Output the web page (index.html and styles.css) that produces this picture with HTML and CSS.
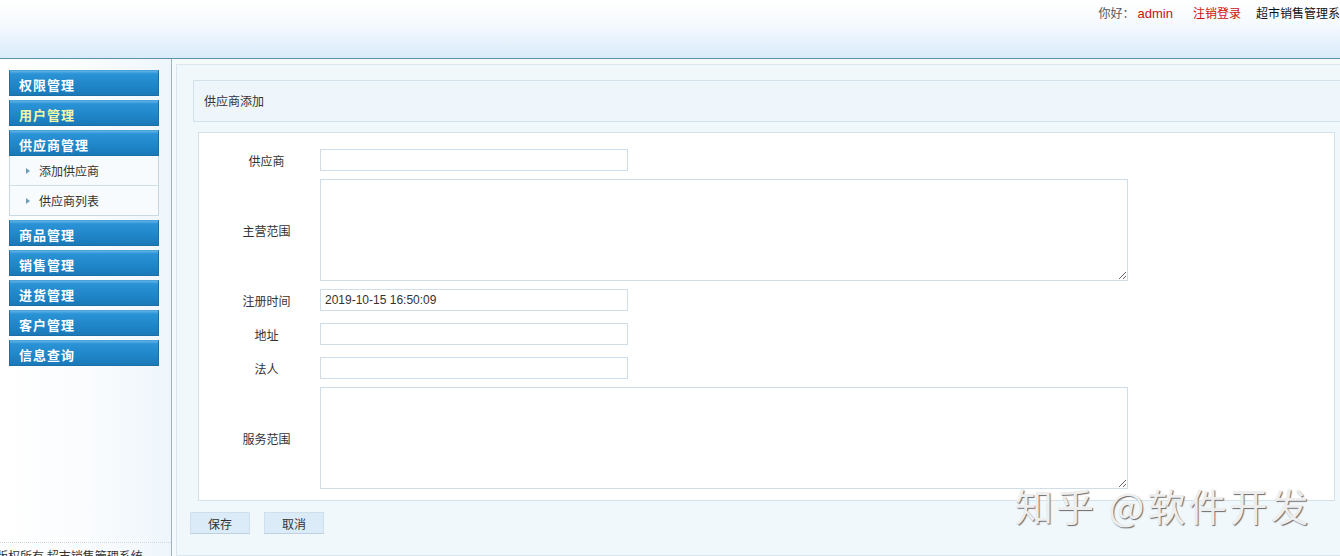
FILE: index.html
```html
<!DOCTYPE html>
<html lang="zh-CN">

<head>
  <meta charset="UTF-8">
  <meta name="viewport" content="width=device-width, initial-scale=1.0">
  <title>超市销售管理系统</title>
  <link rel="stylesheet" href="styles.css">
</head>

<body>
  <!-- Header -->
  <div class="header">
    <div class="user-info">
      <span class="hello">你好：</span>
      <span class="user-name">admin</span>
      <a class="logout" href="#">注销登录</a>
      <span class="sys-name">超市销售管理系统</span>
    </div>
  </div>

  <div class="main">
    <!-- Sidebar -->
    <div class="sidebar">
      <ul class="menu">
        <li class="menu-title">权限管理</li>
        <li class="menu-title active">用户管理</li>
        <li class="menu-title">供应商管理</li>
        <li class="menu-sub">
          <a href="#"><span class="arrow"></span>添加供应商</a>
          <a href="#"><span class="arrow"></span>供应商列表</a>
        </li>
        <li class="menu-title">商品管理</li>
        <li class="menu-title">销售管理</li>
        <li class="menu-title">进货管理</li>
        <li class="menu-title">客户管理</li>
        <li class="menu-title">信息查询</li>
      </ul>
      <div class="side-footer">版权所有 超市销售管理系统</div>
    </div>

    <!-- Content -->
    <div class="content">
      <div class="panel">
        <div class="panel-title">供应商添加</div>

        <form class="form-box" onsubmit="return false;">
          <div class="form-row">
            <label for="gys">供应商</label>
            <input type="text" id="gys">
          </div>
          <div class="form-row">
            <label for="zyfw">主营范围</label>
            <textarea id="zyfw"></textarea>
          </div>
          <div class="form-row">
            <label for="zcsj">注册时间</label>
            <input type="text" id="zcsj" value="2019-10-15 16:50:09">
          </div>
          <div class="form-row spaced">
            <label for="dz">地址</label>
            <input type="text" id="dz">
          </div>
          <div class="form-row spaced">
            <label for="fr">法人</label>
            <input type="text" id="fr">
          </div>
          <div class="form-row">
            <label for="fwfw">服务范围</label>
            <textarea id="fwfw"></textarea>
          </div>
        </form>

        <div class="btn-row">
          <button class="btn">保存</button>
          <button class="btn">取消</button>
        </div>
      </div>
    </div>
  </div>

  <div class="watermark">知乎 @软件开发</div>
</body>

</html>
```

FILE: styles.css
```css
body {
  font-family: "Noto Sans CJK SC", "Liberation Sans", sans-serif;
  font-size: 12px;
  color: #333333;
  margin: 0;
  padding: 0;
  width: 1340px;
  height: 556px;
  overflow: hidden;
  position: relative;
}

/* Header */
.header {
  height: 58px;
  background: linear-gradient(to bottom, #ffffff 0%, #f6fafe 40%, #d9ebfa 100%);
  border-bottom: 1px solid #5f93ab;
  display: flex;
  justify-content: flex-end;
  overflow: hidden;
}

.user-info {
  display: flex;
  align-items: baseline;
  height: 26px;
  line-height: 26px;
  margin-right: -12px;
  white-space: nowrap;
}

.hello {
  color: #555555;
  font-size: 12px;
}

.user-name {
  color: #cc1111;
  font-family: "Liberation Sans", sans-serif;
  font-size: 13px;
  margin-left: 3px;
}

.logout {
  color: #cc1111;
  text-decoration: none;
  margin-left: 20px;
}

.sys-name {
  color: #111111;
  margin-left: 15px;
}

/* Layout */
.main {
  display: flex;
  height: 497px;
}

/* Sidebar */
.sidebar {
  width: 171px;
  border-right: 1px solid #9fb3bf;
  background: linear-gradient(to right, #ffffff 0%, #fafcfe 50%, #eef6fc 100%);
  display: flex;
  flex-direction: column;
  overflow: hidden;
}

.menu {
  list-style: none;
  margin: 0;
  padding: 11px 0 0 9px;
}

.menu-title {
  width: 150px;
  height: 26px;
  box-sizing: border-box;
  margin-bottom: 4px;
  padding-left: 9px;
  line-height: 28px;
  font-size: 13px;
  font-weight: bold;
  letter-spacing: 1px;
  color: #ffffff;
  background: linear-gradient(to bottom, #5fb3e6 0%, #2a93d6 12%, #1f86c8 60%, #1a79b8 100%);
  border: 1px solid #1b6fa6;
  border-top-color: #4aa2d8;
}

.menu-title.active {
  color: #f4f9a8;
}

.menu-title + .menu-sub {
  margin-top: -4px;
}

.menu-sub {
  width: 150px;
  box-sizing: border-box;
  margin-bottom: 4px;
  border: 1px solid #c8d9e4;
  border-top: none;
  background-color: #f7fbfe;
}

.menu-sub a {
  display: flex;
  align-items: center;
  height: 29px;
  padding-left: 16px;
  color: #333333;
  text-decoration: none;
  font-size: 12px;
  border-bottom: 1px solid #d3e0e8;
}

.menu-sub a:last-child {
  border-bottom: none;
}

.arrow {
  width: 0;
  height: 0;
  border-top: 3px solid transparent;
  border-bottom: 3px solid transparent;
  border-left: 4px solid #6f9fb8;
  margin-right: 9px;
}

.side-footer {
  margin-top: auto;
  flex-shrink: 0;
  height: 6px;
  border-top: 1px dotted #cfd7dc;
  padding-top: 7px;
  margin-left: -4px;
  font-size: 12px;
  line-height: 12px;
  color: #333333;
  white-space: nowrap;
}

/* Content */
.content {
  flex: 1;
  background-color: #f4f9fc;
  padding: 5px 0 0 4px;
  overflow: hidden;
}

.panel {
  height: 100%;
  box-sizing: border-box;
  border: 1px solid #dbe7ee;
  border-right: none;
  background-color: #f1f8fc;
  padding: 15px 0 0 13px;
}

.panel-title {
  margin-left: 3px;
  margin-right: -10px;
  height: 40px;
  line-height: 40px;
  padding-left: 10px;
  border: 1px solid #d3e1ea;
  background-color: #eef6fb;
  font-size: 12px;
  color: #333333;
}

.form-box {
  width: 1137px;
  box-sizing: border-box;
  margin: 10px 0 0 8px;
  padding: 16px 0 11px 0;
  border: 1px solid #d3e2ea;
  background-color: #ffffff;
  display: flex;
  flex-direction: column;
  gap: 8px;
}

.form-row {
  display: flex;
  align-items: center;
}

.form-row.spaced {
  margin-top: 4px;
}

.form-row label {
  width: 107px;
  padding-left: 14px;
  text-align: center;
  color: #333333;
  font-size: 12px;
}

.form-row input {
  width: 308px;
  height: 22px;
  box-sizing: border-box;
  border: 1px solid #cfdee8;
  padding: 0 4px;
  font-family: "Liberation Sans", sans-serif;
  font-size: 12px;
  color: #333333;
  outline: none;
}

.form-row textarea {
  width: 808px;
  height: 102px;
  box-sizing: border-box;
  border: 1px solid #cfdee8;
  margin: 0;
  padding: 2px 4px;
  outline: none;
}

/* Buttons */
.btn-row {
  display: flex;
  gap: 14px;
  margin-top: 11px;
}

.btn {
  width: 60px;
  height: 22px;
  border: 1px solid #cfe0ec;
  border-bottom-color: #bcd2e2;
  background-color: #dcebf8;
  color: #333333;
  font-family: "Noto Sans CJK SC", sans-serif;
  font-size: 12px;
  padding: 0;
  cursor: pointer;
}

.btn:hover {
  background-color: #cfe3f5;
}

/* Watermark */
.watermark {
  position: absolute;
  left: 1015px;
  top: 477px;
  font-size: 38px;
  letter-spacing: 3px;
  color: #eeeeee;
  text-shadow: 1px 1px 1px #6a6a6a;
  white-space: nowrap;
  pointer-events: none;
}
```
